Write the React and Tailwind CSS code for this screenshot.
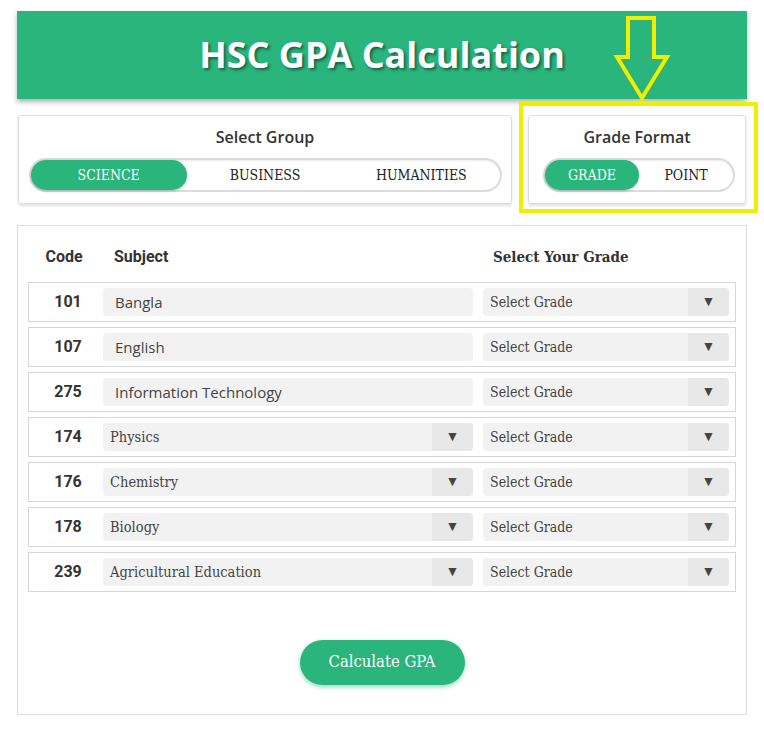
import { useState } from "react";

const slab = "font-['DejaVu_Serif_Condensed','DejaVu_Serif',serif]";
const sans = "font-['Open_Sans','Noto_Sans',sans-serif]";

function ArrowDown() {
    return (
        <svg
            className="absolute left-[612px] top-[14px]"
            width="60"
            height="88"
            viewBox="0 0 60 88"
            fill="none"
        >
            <path
                d="M16 4 H42 V43 H55 L30 84 L5 43 H16 Z"
                stroke="#f2ee00"
                strokeWidth="4"
                strokeLinejoin="miter"
            />
        </svg>
    );
}

function Toggle({ options, active, onChange, width }) {
    return (
        <div className={`flex h-[34px] rounded-full border-2 border-[#dcdcdc] shadow-[inset_0_1px_2px_rgba(0,0,0,0.08)] ${width}`}>
            {options.map((opt) => (
                <button
                    key={opt}
                    onClick={() => onChange(opt)}
                    className={`flex-1 rounded-full text-[14px] leading-none ${slab} ${
                        active === opt
                            ? "bg-[#29b57b] text-white shadow-[0_1px_3px_rgba(0,0,0,0.25)]"
                            : "text-[#222]"
                    }`}
                >
                    {opt}
                </button>
            ))}
        </div>
    );
}

function Caret() {
    return (
        <span className="flex w-[41px] items-center justify-center rounded-r-sm bg-[#e8e8e8] pb-[3px] text-[14px] leading-none text-[#444]">
            ▼
        </span>
    );
}

function GradeSelect() {
    return (
        <div className="flex h-[28px] w-[246px] rounded-sm bg-[#f2f2f2]">
            <span className={`flex-1 pl-[7px] text-[14px] leading-[28px] text-[#444] ${slab}`}>
                Select Grade
            </span>
            <Caret />
        </div>
    );
}

export default function App() {
    const [group, setGroup] = useState("SCIENCE");
    const [format, setFormat] = useState("GRADE");

    const subjects = [
        { code: "101", name: "Bangla", fixed: true },
        { code: "107", name: "English", fixed: true },
        { code: "275", name: "Information Technology", fixed: true },
        { code: "174", name: "Physics" },
        { code: "176", name: "Chemistry" },
        { code: "178", name: "Biology" },
        { code: "239", name: "Agricultural Education" },
    ];

    return (
        <div className="relative min-h-[729px] bg-white pt-[11px]">
            <div className="ml-[17px] w-[730px]">
                {/* Header */}
                <div className="flex h-[88px] items-center justify-center bg-[#29b57b] shadow-[0_3px_5px_rgba(0,0,0,0.3)]">
                    <h1 className={`text-[36px] font-bold text-white [text-shadow:2px_2px_3px_rgba(0,0,0,0.45)] ${sans}`}>
                        HSC GPA Calculation
                    </h1>
                </div>

                {/* Group + format */}
                <div className="mt-[16px] flex gap-[16px]">
                    <div className="ml-px flex h-[89px] w-[494px] flex-col items-center rounded-[3px] border border-[#dedede] pt-[10px] shadow-[0_2px_3px_rgba(0,0,0,0.12)]">
                        <h2 className={`text-[16px] font-semibold leading-[22px] text-[#333] ${sans}`}>Select Group</h2>
                        <div className="mt-[10px]">
                            <Toggle
                                options={["SCIENCE", "BUSINESS", "HUMANITIES"]}
                                active={group}
                                onChange={setGroup}
                                width="w-[473px]"
                            />
                        </div>
                    </div>
                    <div className="relative">
                        <div className="flex h-[89px] w-[218px] flex-col items-center rounded-[3px] border border-[#dedede] pt-[10px] shadow-[0_2px_3px_rgba(0,0,0,0.12)]">
                            <h2 className={`text-[16px] font-semibold leading-[22px] text-[#333] ${sans}`}>Grade Format</h2>
                            <div className="ml-[4px] mt-[10px]">
                                <Toggle
                                    options={["GRADE", "POINT"]}
                                    active={format}
                                    onChange={setFormat}
                                    width="w-[192px]"
                                />
                            </div>
                        </div>
                        <div className="pointer-events-none absolute left-[-9px] top-[-13px] h-[111px] w-[239px] border-4 border-[#f2ee00]" />
                    </div>
                </div>

                {/* Subjects */}
                <div className="mt-[21px] h-[490px] border border-[#dcdcdc] px-[10px] pt-[20px]">
                    <div className="flex h-[22px] items-center text-[16px] font-bold text-[#333]">
                        <span className="w-[72px] text-center font-['Roboto',sans-serif]">Code</span>
                        <span className="w-[383px] pl-[14px] font-['Roboto',sans-serif]">Subject</span>
                        <span className={`pl-[10px] text-[15px] ${slab}`}>Select Your Grade</span>
                    </div>

                    <div className="mt-[14px] flex flex-col gap-[5px]">
                        {subjects.map((s) => (
                            <div
                                key={s.code}
                                className="flex h-[40px] items-center border border-[#d6d6d6] pr-[6px]"
                            >
                                <span className="w-[74px] pl-[4px] text-center font-['Roboto',sans-serif] text-[16px] font-bold text-[#333]">
                                    {s.code}
                                </span>
                                {s.fixed ? (
                                    <div className={`h-[28px] w-[370px] rounded-sm bg-[#f2f2f2] pl-[12px] text-[15px] leading-[28px] text-[#444] ${sans}`}>
                                        {s.name}
                                    </div>
                                ) : (
                                    <div className="flex h-[28px] w-[370px] rounded-sm bg-[#f2f2f2]">
                                        <span className={`flex-1 pl-[7px] text-[14.5px] leading-[28px] text-[#444] ${slab}`}>
                                            {s.name}
                                        </span>
                                        <Caret />
                                    </div>
                                )}
                                <div className="ml-[10px]">
                                    <GradeSelect />
                                </div>
                            </div>
                        ))}
                    </div>

                    <div className="mt-[48px] flex justify-center">
                        <button className={`h-[45px] w-[165px] rounded-full bg-[#29b57b] text-[16.5px] text-white shadow-[0_2px_4px_rgba(41,181,123,0.5)] ${slab}`}>
                            Calculate GPA
                        </button>
                    </div>
                </div>
            </div>
            <ArrowDown />
        </div>
    );
}
